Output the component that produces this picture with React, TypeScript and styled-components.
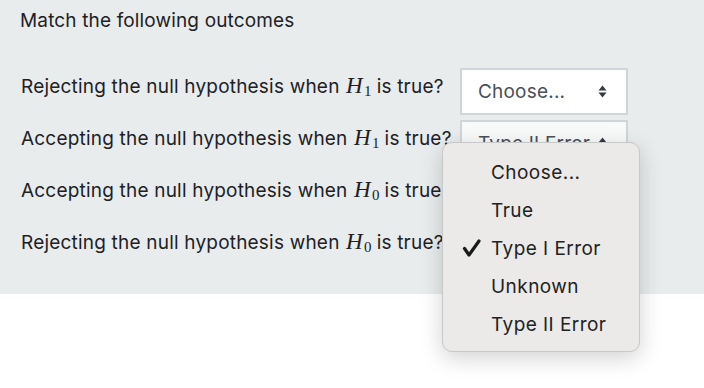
import React from "react";
import styled, { createGlobalStyle } from "styled-components";

const Global = createGlobalStyle`
  html, body { margin: 0; padding: 0; background: #ffffff; }
  body { font-family: Inter, "Noto Sans", sans-serif; color: #1d2125; }
`;

const Page = styled.div`
  position: relative;
  width: 704px;
  height: 388px;
  overflow: hidden;
`;

const Panel = styled.div`
  background: #e8ecec;
  height: 294px;
  box-sizing: border-box;
  padding: 9px 20px 0 20px;
`;

const Title = styled.div`
  font-size: 19px;
  line-height: 24px;
  letter-spacing: 0.15px;
  margin-bottom: 35px;
`;

const Rows = styled.div`
  display: flex;
  flex-direction: column;
`;

const Row = styled.div`
  display: flex;
  align-items: flex-start;
  height: 52px;
`;

const Label = styled.div`
  font-size: 19px;
  line-height: 24px;
  padding-top: 6px;
  padding-left: 1px;
  white-space: nowrap;
  letter-spacing: 0.2px;
  width: 440px;
  box-sizing: border-box;
  flex: none;
`;

const Math = styled.span`
  font-family: "Liberation Serif", "DejaVu Serif", serif;
  font-style: italic;
  font-size: 23px;
  margin: 0 5px 0 1px;
  sub {
    font-style: normal;
    font-size: 15px;
    vertical-align: -3px;
    margin-left: 1px;
  }
`;

const Select = styled.div<{ $faded?: boolean }>`
  box-sizing: border-box;
  width: 168px;
  height: 47px;
  background: ${(p) => (p.$faded ? "#f8f9f9" : "#ffffff")};
  border: 2px solid #d0d5d8;
  display: flex;
  align-items: center;
  justify-content: space-between;
  padding: 0 19px 0 16px;
  font-size: 19px;
  letter-spacing: 0.2px;
  color: #495057;
`;

const Arrows = styled.svg`
  width: 9px;
  height: 13px;
  flex: none;
`;

const Menu = styled.div`
  position: absolute;
  left: 442px;
  top: 142px;
  width: 198px;
  height: 210px;
  box-sizing: border-box;
  background: #ebeae9;
  border: 1px solid #c8c8c8;
  border-radius: 10px;
  box-shadow: 0 6px 22px rgba(0, 0, 0, 0.18);
  padding-top: 10px;
  display: flex;
  flex-direction: column;
`;

const Item = styled.div`
  height: 38px;
  display: flex;
  align-items: center;
  font-size: 19px;
  color: #222222;
  position: relative;
  padding-left: 48px;
  letter-spacing: 0.45px;
`;

const Check = styled.svg`
  position: absolute;
  left: 19px;
  top: 10px;
  width: 19px;
  height: 18px;
`;

const UpDown = () => (
  <Arrows viewBox="0 0 9 13">
    <path d="M4.5 0.5 L8.5 5.5 L0.5 5.5 Z" fill="#343a40" />
    <path d="M4.5 12.5 L8.5 7.5 L0.5 7.5 Z" fill="#343a40" />
  </Arrows>
);

const H = ({ n }: { n: number }) => (
  <Math>
    H<sub>{n}</sub>
  </Math>
);

export default function App() {
  const items = ["Choose...", "True", "Type I Error", "Unknown", "Type II Error"];
  return (
    <Page>
      <Global />
      <Panel>
        <Title>Match the following outcomes</Title>
        <Rows>
          <Row>
            <Label>
              Rejecting the null hypothesis when <H n={1} />is true?
            </Label>
            <Select>
              <span>Choose...</span>
              <UpDown />
            </Select>
          </Row>
          <Row>
            <Label>
              Accepting the null hypothesis when <H n={1} />is true?
            </Label>
            <Select $faded>
              <span>Type II Error</span>
              <UpDown />
            </Select>
          </Row>
          <Row>
            <Label>
              Accepting the null hypothesis when <H n={0} />is true?
            </Label>
          </Row>
          <Row>
            <Label>
              Rejecting the null hypothesis when <H n={0} />is true?
            </Label>
          </Row>
        </Rows>
      </Panel>
      <Menu>
        {items.map((it) => (
          <Item key={it}>
            {it === "Type I Error" && (
              <Check viewBox="0 0 19 18">
                <path d="M2.5 9.5 L7 16 L17 2" fill="none" stroke="#1a1a1a" strokeWidth="3.2" strokeLinecap="round" strokeLinejoin="round" />
              </Check>
            )}
            {it}
          </Item>
        ))}
      </Menu>
    </Page>
  );
}
